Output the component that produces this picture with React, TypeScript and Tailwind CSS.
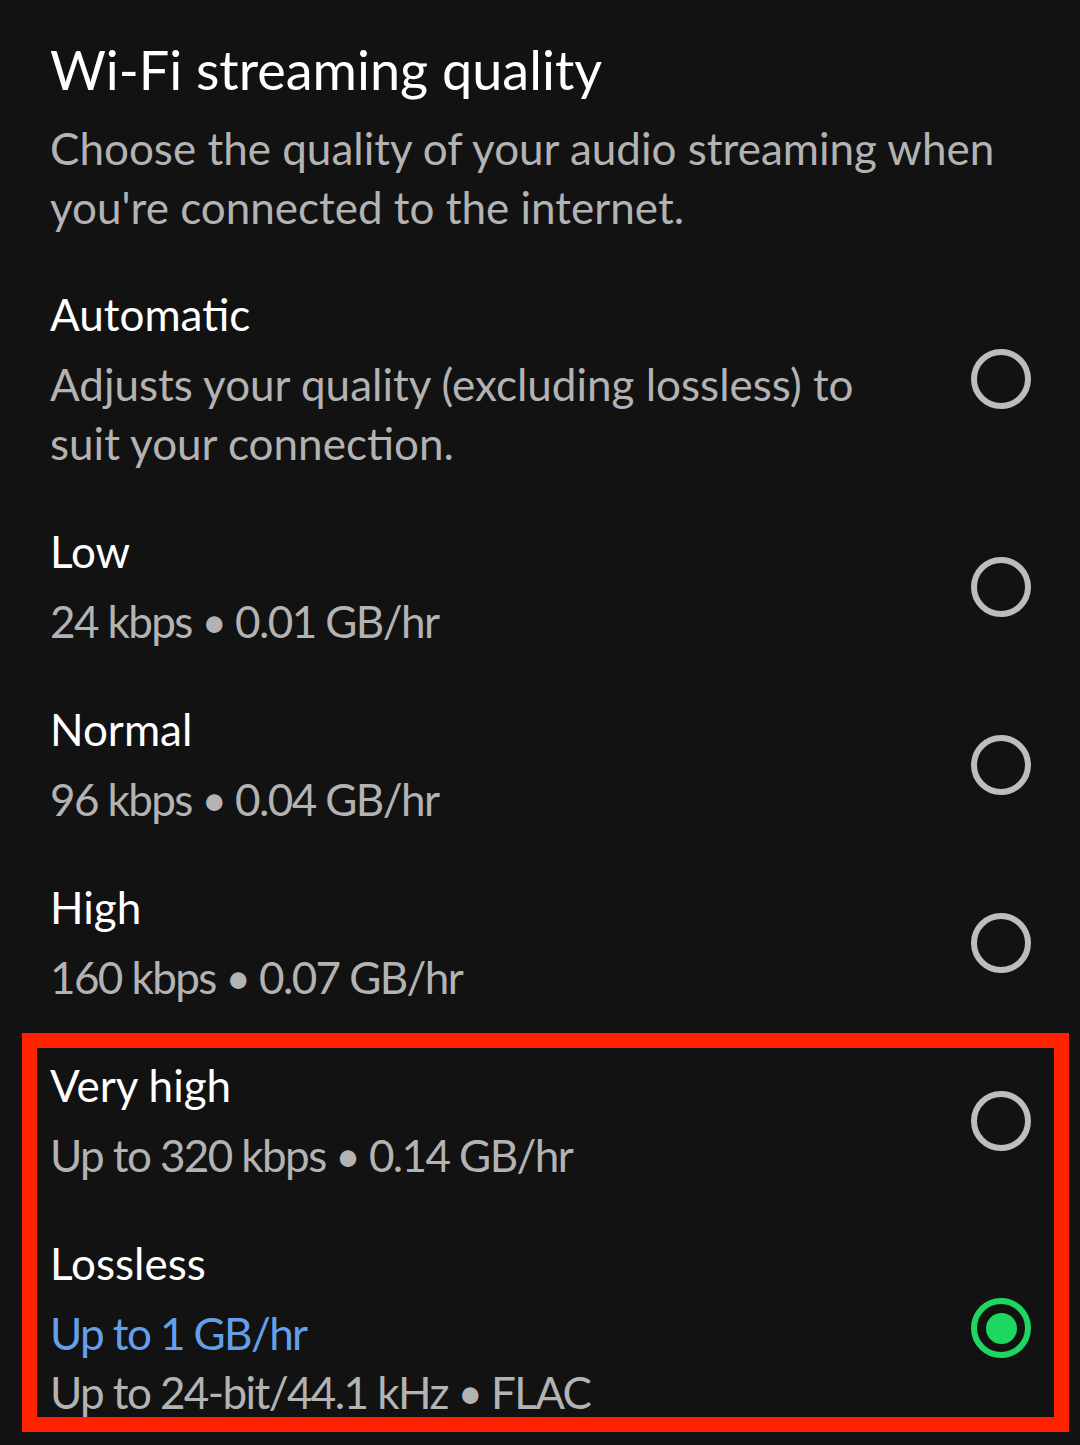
import { Fragment } from 'react'

type Line = { text: string; accent?: boolean; metric?: boolean }

type Option = {
  id: string
  title: string
  lines: Line[]
}

const options: Option[] = [
  {
    id: 'auto',
    title: 'Automatic',
    lines: [{ text: 'Adjusts your quality (excluding lossless) to suit your connection.' }],
  },
  { id: 'low', title: 'Low', lines: [{ text: '24 kbps • 0.01 GB/hr', metric: true }] },
  { id: 'normal', title: 'Normal', lines: [{ text: '96 kbps • 0.04 GB/hr', metric: true }] },
  { id: 'high', title: 'High', lines: [{ text: '160 kbps • 0.07 GB/hr', metric: true }] },
  { id: 'veryhigh', title: 'Very high', lines: [{ text: 'Up to 320 kbps • 0.14 GB/hr', metric: true }] },
  {
    id: 'lossless',
    title: 'Lossless',
    lines: [
      { text: 'Up to 1 GB/hr', accent: true, metric: true },
      { text: 'Up to 24-bit/44.1 kHz • FLAC', metric: true },
    ],
  },
]

const Radio = ({ checked }: { checked: boolean }) =>
  checked ? (
    <span className="flex h-[60px] w-[60px] shrink-0 items-center justify-center rounded-full border-[6px] border-[#1ed760]">
      <span className="h-[31px] w-[31px] rounded-full bg-[#1ed760]" />
    </span>
  ) : (
    <span className="h-[60px] w-[60px] shrink-0 rounded-full border-[6px] border-[#bdbdbd]" />
  )

function OptionRow({ option, checked }: { option: Option; checked: boolean }) {
  return (
    <div className="flex items-center justify-between gap-10">
      <div className="flex flex-col">
        <div className="text-[44px] leading-[59px] text-white">{option.title}</div>
        <div className="mt-[11px] flex flex-col">
          {option.lines.map((l) => (
            <div
              key={l.text}
              className={`max-w-[860px] text-[44px] leading-[59px] ${l.metric ? 'tracking-[-1.6px]' : ''} ${
                l.accent ? 'text-[#64a0ea]' : 'text-[#b3b3b3]'
              }`}
            >
              {l.text}
            </div>
          ))}
        </div>
      </div>
      <Radio checked={checked} />
    </div>
  )
}

export default function App() {
  const selected = 'lossless'
  const plain = options.slice(0, 4)
  const boxed = options.slice(4)

  return (
    <div
      className="min-h-[1445px] w-[1080px] bg-[#121212] pl-[50px] pr-[49px] pt-[40px]"
      style={{ fontFamily: 'Lato, "Noto Sans", sans-serif' }}
    >
      <h1 className="text-[54px] leading-[60px] font-normal text-white">Wi-Fi streaming quality</h1>
      <p className="mt-[19px] text-[44px] leading-[59px] text-[#b3b3b3]">
        Choose the quality of your audio streaming when you're connected to the internet.
      </p>

      <div className="mt-[48px] flex flex-col gap-[49px]">
        {plain.map((o) => (
          <OptionRow key={o.id} option={o} checked={o.id === selected} />
        ))}

        {/* highlighted pair */}
        <div className="relative flex flex-col gap-[49px]">
          <span className="pointer-events-none absolute -top-[23px] -bottom-[10px] -left-[28px] -right-[38px] border-[15px] border-[#ff2200]" />
          {boxed.map((o) => (
            <Fragment key={o.id}>
              <OptionRow option={o} checked={o.id === selected} />
            </Fragment>
          ))}
        </div>
      </div>
    </div>
  )
}
